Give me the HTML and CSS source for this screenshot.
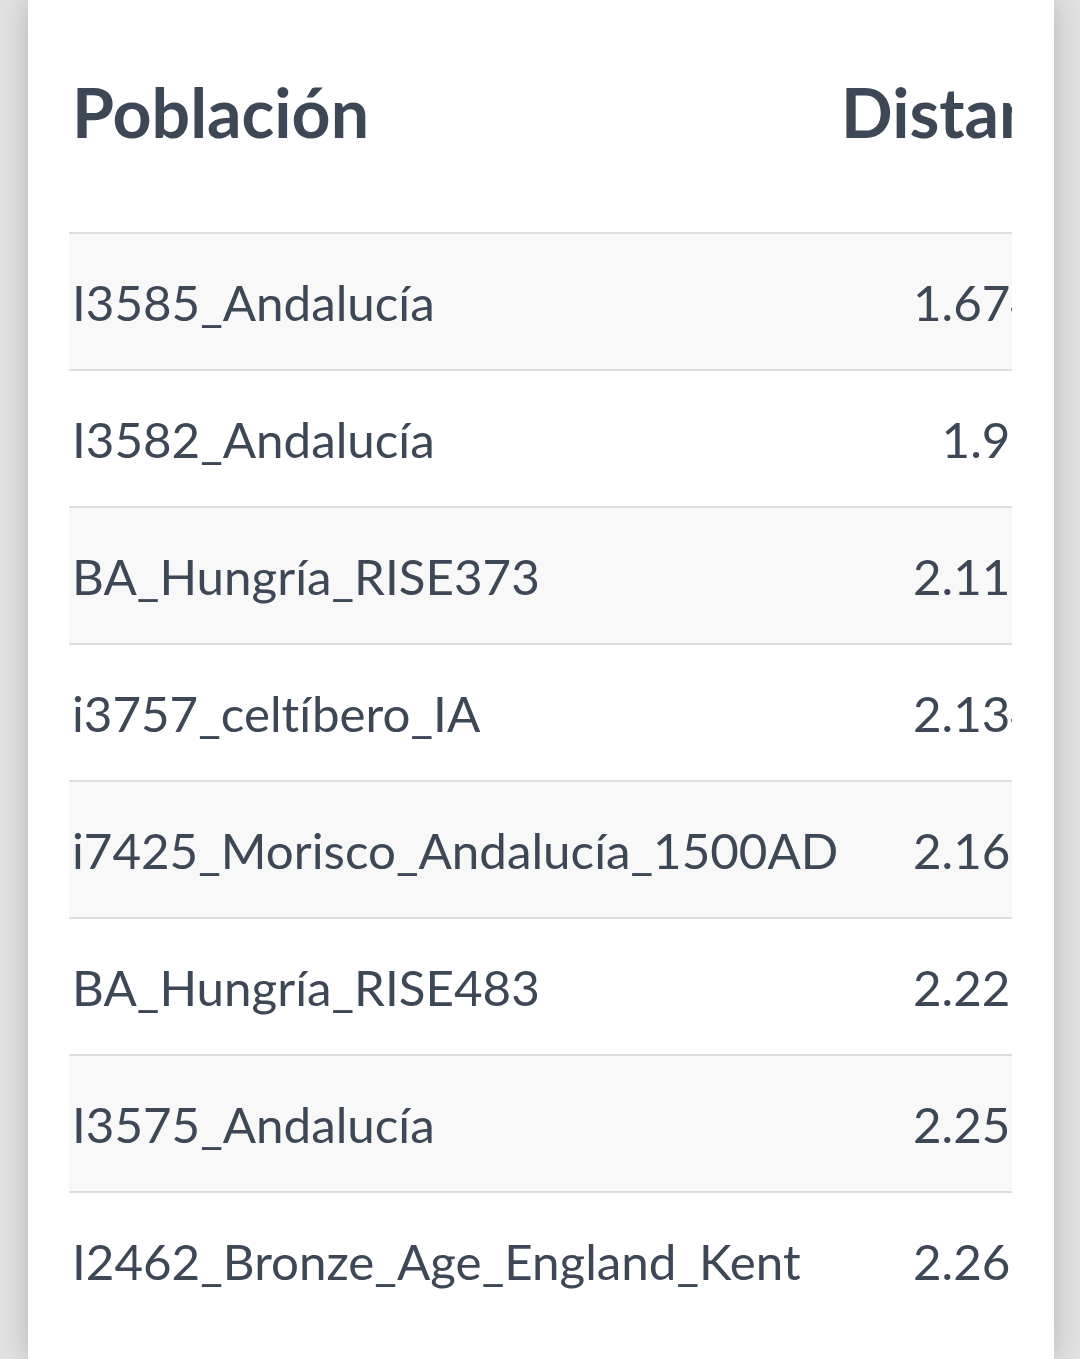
FILE: index.html
```html
<!DOCTYPE html>
<html>
<head>
    <title>Distancias</title>
    <link rel="stylesheet" href="styles.css">
</head>
<body>
    <div class="card">
        <div class="table-wrap">
            <table class="results">
                <thead>
                    <tr>
                        <th class="col-pop">Población</th>
                        <th class="col-dist">Distancia</th>
                    </tr>
                </thead>
                <tbody>
                    <tr><td>I3585_Andalucía</td><td class="num">1.674</td></tr>
                    <tr><td>I3582_Andalucía</td><td class="num">1.9</td></tr>
                    <tr><td>BA_Hungría_RISE373</td><td class="num">2.110</td></tr>
                    <tr><td>i3757_celtíbero_IA</td><td class="num">2.134</td></tr>
                    <tr><td>i7425_Morisco_Andalucía_1500AD</td><td class="num">2.162</td></tr>
                    <tr><td>BA_Hungría_RISE483</td><td class="num">2.221</td></tr>
                    <tr><td>I3575_Andalucía</td><td class="num">2.251</td></tr>
                    <tr><td>I2462_Bronze_Age_England_Kent</td><td class="num">2.263</td></tr>
                </tbody>
            </table>
        </div>
    </div>
</body>
</html>
```
FILE: styles.css
```css
/* Global */
* {
    box-sizing: border-box;
}

body {
    margin: 0;
    padding: 0;
    font-family: Lato, "Open Sans", sans-serif;
    font-variant-ligatures: none;
    background-color: #e2e2e2;
    color: #3d4756;
}

/* Card */
.card {
    min-height: 100vh;
    margin: 0 26px 0 28px;
    padding: 0 42px 0 41px;
    background-color: #fff;
    box-shadow: 0 0 30px rgba(0, 0, 0, 0.2);
}

.table-wrap {
    overflow: hidden;
}

/* Table */
.results {
    border-collapse: collapse;
    table-layout: fixed;
    width: 1045px;
}

.results th {
    padding: 67px 3px 75px 3px;
    font-size: 68px;
    font-weight: 700;
    text-align: left;
    line-height: 90px;
}

.col-pop {
    width: 769px;
}

.col-dist {
    width: 276px;
}

.results td {
    height: 137px;
    padding: 0 3px;
    border-top: 2px solid #dddddd;
    font-size: 49.3px;
    line-height: 64px;
    white-space: nowrap;
}

.results td.num {
    text-align: center;
}

.results tbody tr:nth-child(odd) {
    background-color: #f8f8f8;
}
```
